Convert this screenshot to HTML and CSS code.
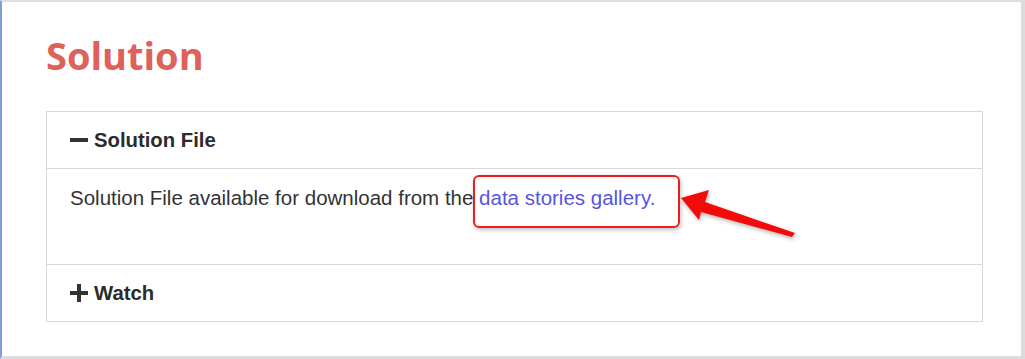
FILE: index.html
```html
<!DOCTYPE html>
<html lang="en">
<head>
  <meta charset="UTF-8">
  <title>Solution</title>
  <link rel="stylesheet" href="styles.css">
</head>
<body>
  <div class="frame">
    <h1 class="title">Solution</h1>

    <!-- Accordion -->
    <div class="accordion">
      <div class="acc-head">
        <span class="acc-icon minus"></span>
        <span>Solution File</span>
      </div>
      <div class="acc-body">
        Solution File available for download from the <a href="#" class="link">data stories gallery.</a>
      </div>
      <div class="acc-head last">
        <span class="acc-icon plus"></span>
        <span>Watch</span>
      </div>
    </div>

    <!-- Annotation over the link -->
    <div class="callout"></div>
    <svg class="arrow" width="130" height="60" viewBox="0 0 130 60">
      <polygon points="2,17 30,9 26,21 116,52 113,56 22,31 20,39" fill="#f50a0a"/>
    </svg>
  </div>
</body>
</html>
```

FILE: styles.css
```css
body {
  margin: 0;
  background: #ffffff;
  font-family: "Liberation Sans", Arial, sans-serif;
}

.frame {
  position: relative;
  box-sizing: border-box;
  width: 1025px;
  height: 359px;
  border-top: 2px solid #dedede;
  border-right: 4px solid #dcdcdc;
  border-bottom: 3px solid #dcdcdc;
  border-left: 2px solid #7f9ce0;
  padding: 30px 0 0 44px;
}

.title {
  margin: 0 0 33px 0;
  font-family: "Open Sans", sans-serif;
  font-weight: 700;
  font-size: 38px;
  line-height: 46px;
  color: #e0605a;
}

.accordion {
  width: 935px;
  border: 1px solid #d8d8dc;
}

.acc-head {
  display: flex;
  align-items: center;
  gap: 6px;
  height: 56px;
  padding-left: 23px;
  font-weight: bold;
  font-size: 20.3px;
  color: #2b2b2b;
  border-bottom: 1px solid #d8d8dc;
}

.acc-head.last {
  border-bottom: none;
}

.acc-icon {
  position: relative;
  width: 18px;
  height: 18px;
}

.acc-icon::before,
.acc-icon::after {
  content: "";
  position: absolute;
  background: #333333;
}

.acc-icon::before {
  left: 0;
  right: 0;
  top: 7px;
  height: 4px;
}

.plus::after {
  top: 0;
  bottom: 0;
  left: 7px;
  width: 4px;
}

.acc-body {
  height: 96px;
  box-sizing: border-box;
  padding: 17px 0 0 23px;
  font-size: 20.5px;
  color: #333333;
  border-bottom: 1px solid #d8d8dc;
}

.link {
  color: #5555e0;
  text-decoration: none;
}

.callout {
  position: absolute;
  left: 471px;
  top: 173px;
  width: 203px;
  height: 49px;
  border: 2px solid #f01c1c;
  border-radius: 6px;
  box-shadow: 1px 2px 4px rgba(0, 0, 0, 0.25);
}

.arrow {
  position: absolute;
  left: 677px;
  top: 179px;
  filter: drop-shadow(1px 2px 2px rgba(0, 0, 0, 0.3));
}
```
